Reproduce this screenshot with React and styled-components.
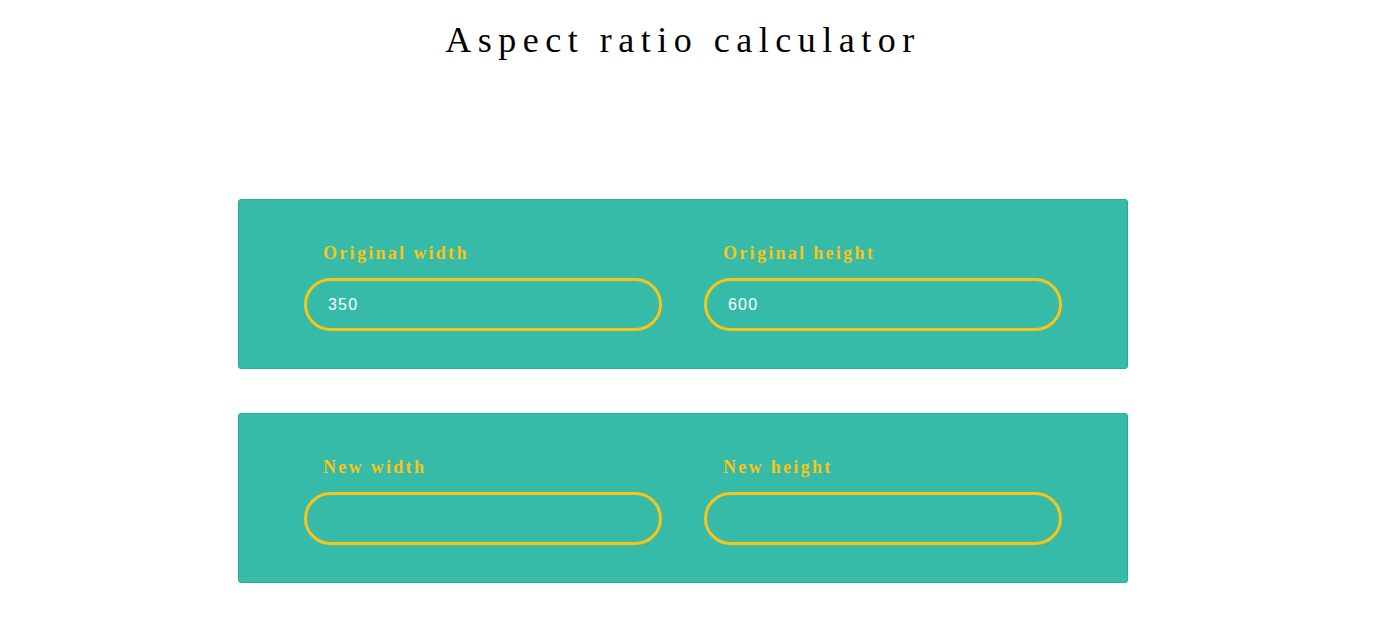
import React from "react"
import styled, { createGlobalStyle } from "styled-components"

const teal = "#37bba9"
const tealEdge = "#20b09b"
const yellow = "#f9c416"

const GlobalStyle = createGlobalStyle`
	html, body {
		margin: 0;
		padding: 0;
		background: #fff;
	}
	body {
		font-family: "Liberation Serif", "Times New Roman", serif;
	}
`

const Page = styled.main`
	width: 1366px;
	display: flex;
	flex-direction: column;
	align-items: center;
	padding-top: 17px;
`

const Title = styled.h1`
	margin: 0 0 136px;
	font-family: "Liberation Serif", "Times New Roman", serif;
	font-weight: 400;
	font-size: 36px;
	line-height: 46px;
	letter-spacing: 6.5px;
	color: #000;
`

const Panels = styled.div`
	display: flex;
	flex-direction: column;
	gap: 44px;
`

const Panel = styled.section`
	box-sizing: border-box;
	width: 890px;
	height: 170px;
	padding: 42px 65px 0;
	background-color: ${teal};
	border: 1px solid ${tealEdge};
	border-radius: 3px;
	display: grid;
	grid-template-columns: 358px 358px;
	column-gap: 42px;
	align-content: start;
`

const Field = styled.label`
	display: flex;
	flex-direction: column;
`

const Label = styled.span`
	padding-left: 19px;
	margin-bottom: 14px;
	font-family: "Liberation Serif", "Times New Roman", serif;
	font-weight: 700;
	font-size: 18px;
	line-height: 22px;
	letter-spacing: 2.3px;
	color: ${yellow};
`

const Input = styled.input`
	box-sizing: border-box;
	width: 100%;
	height: 53px;
	padding: 0 21px;
	border: 3px solid ${yellow};
	border-radius: 27px;
	background: transparent;
	outline: none;
	font-family: "Liberation Sans", Arial, sans-serif;
	font-size: 16px;
	letter-spacing: 1.2px;
	color: #fff;
`

const InputField = ({ label, value }) => (
	<Field>
		<Label>{label}</Label>
		<Input type="text" defaultValue={value} />
	</Field>
)

const App = () => {
	return (
		<>
			<GlobalStyle />
			<Page>
				<Title>Aspect ratio calculator</Title>
				<Panels>
					<Panel>
						<InputField label="Original width" value="350" />
						<InputField label="Original height" value="600" />
					</Panel>
					<Panel>
						<InputField label="New width" value="" />
						<InputField label="New height" value="" />
					</Panel>
				</Panels>
			</Page>
		</>
	)
}

export default App
